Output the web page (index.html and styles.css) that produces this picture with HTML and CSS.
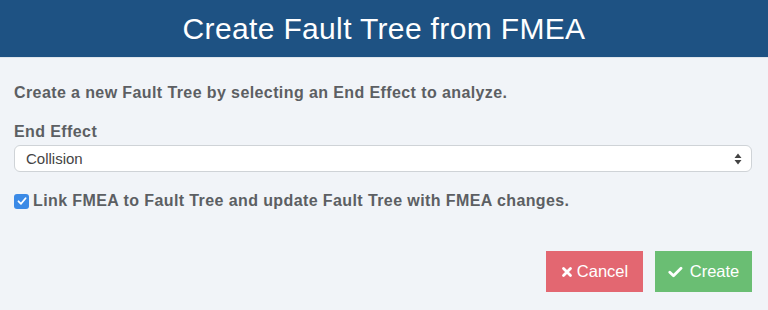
FILE: index.html
```html
<!DOCTYPE html>
<html>
<head>
<meta charset="utf-8">
<link rel="stylesheet" href="styles.css">
</head>
<body>
<div class="modal">
  <div class="header"><h1 class="title">Create Fault Tree from FMEA</h1></div>
  <div class="body">
    <p class="intro">Create a new Fault Tree by selecting an End Effect to analyze.</p>
    <label class="label">End Effect</label>
    <div class="select">
      <span>Collision</span>
      <svg class="arrows" width="8" height="12" viewBox="0 0 8 12"><path d="M4 0.5 L7.5 5 L0.5 5 Z M4 11.5 L7.5 7 L0.5 7 Z" fill="#444"/></svg>
    </div>
    <div class="check-row">
      <span class="checkbox"><svg width="12" height="12" viewBox="0 0 12 12"><path d="M2.5 6.3 L5 8.8 L9.6 3.2" fill="none" stroke="#fff" stroke-width="1.8" stroke-linecap="round" stroke-linejoin="round"/></svg></span>
      <span class="check-text">Link FMEA to Fault Tree and update Fault Tree with FMEA changes.</span>
    </div>
  </div>
  <div class="footer">
    <button class="btn cancel"><svg width="12" height="12" viewBox="0 0 12 12"><path d="M2.5 2.5 L9.5 9.5 M9.5 2.5 L2.5 9.5" stroke="#fff" stroke-width="2.8" stroke-linecap="round"/></svg>Cancel</button>
    <button class="btn create"><svg width="15" height="12" viewBox="0 0 15 12"><path d="M1.8 6.3 L5.5 9.8 L13 2.3" fill="none" stroke="#fff" stroke-width="2.8" stroke-linecap="round" stroke-linejoin="round"/></svg>Create</button>
  </div>
</div>
</body>
</html>
```
FILE: styles.css
```css
html, body { margin: 0; padding: 0; }
body {
  width: 768px; height: 310px; overflow: hidden;
  background: #f1f4f8;
  font-family: "Liberation Sans", Arial, sans-serif;
}
.modal { display: flex; flex-direction: column; height: 310px; }
.header {
  background: #1e5283;
  height: 57px;
  display: flex; align-items: center; justify-content: center;
  border-bottom: 1px solid #dfe5ec;
}
.title { margin: 0; color: #fff; font-weight: normal; font-size: 30px; letter-spacing: 0.35px; }
.body { padding: 0 16px 0 14px; }
.intro { margin: 26px 0 0; font-size: 16px; font-weight: bold; color: #5c5f63; letter-spacing: 0.4px; }
.label { display: block; margin-top: 21px; font-size: 16px; font-weight: bold; color: #5c5f63; letter-spacing: 0.4px; }
.select {
  margin-top: 4px;
  height: 25px;
  background: #fff;
  border: 1px solid #cfd3d7;
  border-radius: 6px;
  display: flex; align-items: center; justify-content: space-between;
  padding: 0 9px 0 11px;
  font-size: 15px; color: #444;
}
.check-row { display: flex; align-items: center; margin-top: 20px; gap: 4px; }
.checkbox {
  width: 15px; height: 15px; border-radius: 3px; background: #3b8ae6;
  display: flex; align-items: center; justify-content: center;
}
.check-text { font-size: 16px; font-weight: bold; color: #5c5f63; letter-spacing: 0.4px; }
.footer { display: flex; justify-content: flex-end; gap: 12px; padding: 0 16px; margin-top: 41px; }
.btn {
  border: none; color: #fff; font-family: inherit; font-size: 16.5px;
  height: 41px; width: 97px; display: flex; align-items: center; justify-content: center; gap: 4px;
  padding: 0;
}
.cancel { background: #e36771; }
.create { background: #6abe73; }
.create svg { margin-right: 3px; }
```
